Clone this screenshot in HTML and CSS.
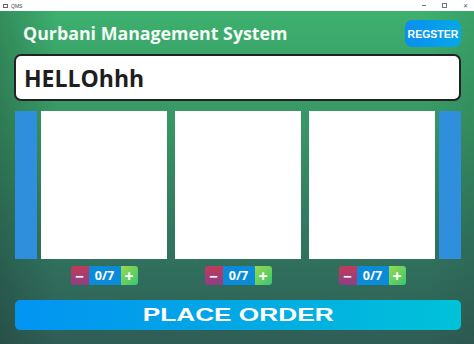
FILE: index.html
```html
<!DOCTYPE html>
<html lang="en">
<head>
    <meta charset="UTF-8">
    <title>QMS</title>
    <link rel="stylesheet" href="styles.css">
</head>
<body>
    <div class="titlebar">
        <div class="tb-left">
            <span class="tb-icon"></span>
            <span class="tb-name">QMS</span>
        </div>
        <div class="tb-controls">
            <span class="tb-min"></span>
            <span class="tb-max"></span>
            <span class="tb-close">&#x2715;</span>
        </div>
    </div>
    <div class="app">
        <div class="header">
            <h1 class="title">Qurbani Management System</h1>
            <button class="register-btn">REGSTER</button>
        </div>
        <div class="name-box">HELLOhhh</div>
        <div class="cards-row">
            <div class="side-bar"></div>
            <div class="card-col">
                <div class="card"></div>
                <div class="counter">
                    <span class="minus">&minus;</span>
                    <span class="count">0/7</span>
                    <span class="plus">+</span>
                </div>
            </div>
            <div class="card-col">
                <div class="card"></div>
                <div class="counter">
                    <span class="minus">&minus;</span>
                    <span class="count">0/7</span>
                    <span class="plus">+</span>
                </div>
            </div>
            <div class="card-col">
                <div class="card"></div>
                <div class="counter">
                    <span class="minus">&minus;</span>
                    <span class="count">0/7</span>
                    <span class="plus">+</span>
                </div>
            </div>
            <div class="side-bar"></div>
        </div>
        <button class="order-btn"><span>PLACE ORDER</span></button>
    </div>
</body>
</html>
```

FILE: styles.css
```css
* {
    margin: 0;
    padding: 0;
    box-sizing: border-box;
}
body {
    width: 474px;
    height: 344px;
    overflow: hidden;
    font-family: "Open Sans", "Noto Sans", sans-serif;
    background: #fff;
}
.titlebar {
    height: 11px;
    background: #fff;
    display: flex;
    justify-content: space-between;
    align-items: center;
    padding: 0 4px 0 3px;
}
.tb-left {
    display: flex;
    align-items: center;
    gap: 3px;
}
.tb-icon {
    width: 5px;
    height: 4px;
    border: 1px solid #666;
}
.tb-name {
    font-family: "Liberation Sans", sans-serif;
    font-size: 5px;
    color: #444;
}
.tb-controls {
    display: flex;
    align-items: center;
    gap: 16px;
    padding-right: 2px;
}
.tb-min {
    width: 4px;
    border-top: 1px solid #777;
}
.tb-max {
    width: 5px;
    height: 5px;
    border: 1px solid #777;
}
.tb-close {
    font-size: 6px;
    color: #555;
    font-family: "DejaVu Sans", sans-serif;
}
.app {
    height: 333px;
    padding: 6px 13px 0 14px;
    background:
        linear-gradient(to right, rgba(20, 40, 35, 0.25), rgba(20, 40, 35, 0) 12%, rgba(20, 40, 35, 0) 90%, rgba(20, 40, 35, 0.1)),
        linear-gradient(to bottom, #3db06f 0%, #379563 35%, #317860 65%, #2f5d55 100%);
}
.header {
    display: flex;
    justify-content: space-between;
    align-items: center;
    height: 32px;
    padding-left: 9px;
}
.title {
    color: #f4fbf6;
    font-size: 17.8px;
    font-weight: 700;
}
.register-btn {
    width: 56px;
    height: 27px;
    border: none;
    border-radius: 7px;
    background: linear-gradient(to right, #0a8ff0, #05a8e6);
    color: #fff;
    font-family: "Liberation Sans", sans-serif;
    font-weight: 700;
    font-size: 10.5px;
    margin-top: 1px;
}
.name-box {
    margin-top: 5px;
    height: 47px;
    background: #fff;
    border: 2px solid #222;
    border-radius: 7px;
    display: flex;
    align-items: center;
    padding-left: 8px;
    font-size: 23px;
    font-weight: 700;
    color: #1e1e1e;
}
.cards-row {
    display: flex;
    margin-top: 10px;
    padding-left: 1px;
    gap: 4px;
}
.side-bar {
    width: 22px;
    height: 148px;
    background: #2f8fdd;
}
.card-col {
    display: flex;
    flex-direction: column;
    align-items: center;
    width: 126px;
}
.card-col + .card-col {
    margin-left: 4px;
}
.card {
    width: 126px;
    height: 148px;
    background: #fff;
}
.counter {
    display: flex;
    margin-top: 7px;
    height: 19px;
    font-family: "Open Sans", sans-serif;
    font-weight: 700;
    color: #fff;
}
.minus, .count, .plus {
    display: flex;
    align-items: center;
    justify-content: center;
}
.minus {
    width: 18px;
    background: linear-gradient(to bottom, #c23a58, #8e3e86);
    border-radius: 3px 0 0 3px;
    font-size: 15px;
}
.count {
    width: 32px;
    background: #0a8bd9;
    font-size: 12.5px;
}
.plus {
    width: 17px;
    background: linear-gradient(135deg, #9ad84a, #38c773);
    border-radius: 0 3px 3px 0;
    font-size: 16px;
}
.order-btn {
    display: flex;
    align-items: center;
    justify-content: center;
    width: 446px;
    height: 30px;
    margin-top: 15px;
    margin-left: 1px;
    border: none;
    border-radius: 5px;
    background: linear-gradient(to right, #0294f2, #03a6e6 45%, #00c2d8);
}
.order-btn span {
    display: inline-block;
    color: #fff;
    font-family: "Liberation Sans", sans-serif;
    font-weight: 700;
    font-size: 19px;
    transform: scaleX(1.38);
}
```
